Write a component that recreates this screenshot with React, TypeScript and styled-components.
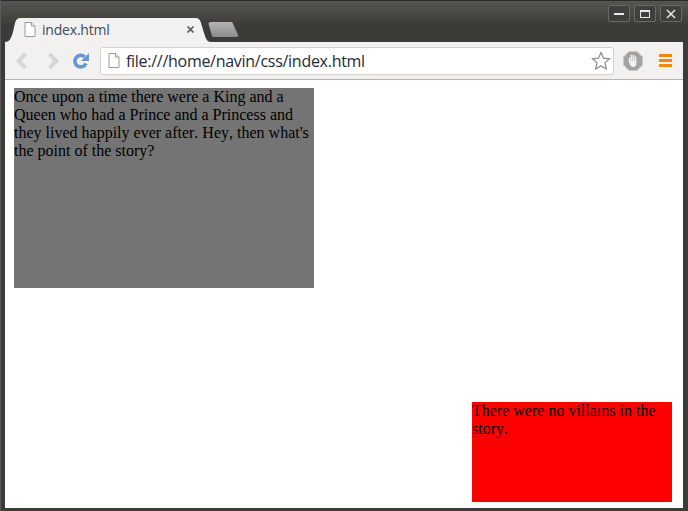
import { FC } from "react";
import styled, { createGlobalStyle } from "styled-components";

const GlobalStyle = createGlobalStyle`
    html, body {
        margin: 0;
        padding: 0;
        width: 688px;
        height: 511px;
        overflow: hidden;
        background: #3c3b37;
    }
`;

const PageIcon: FC<{ size: number }> = ({ size }) => (
    <svg width={size} height={size + 3} viewBox="0 0 12 15">
        <path d="M1 .5h6.5L11 4v10.5H1z" fill="#fff" stroke="#9a9a9a" />
        <path d="M7.5 .5V4H11" fill="#eee" stroke="#9a9a9a" />
    </svg>
);

const App: FC = () => {
    return (
        <Window>
            <GlobalStyle />
            <TitleBar>
                <Tab>
                    <PageIcon size={12} />
                    <TabTitle>index.html</TabTitle>
                    <TabClose>
                        <svg width="9" height="9" viewBox="0 0 9 9">
                            <path d="M1.5 1.5l6 6M7.5 1.5l-6 6" stroke="#555" strokeWidth="1.6" />
                        </svg>
                    </TabClose>
                </Tab>
                <NewTab />
                <WindowControls>
                    <WindowButton>
                        <svg width="12" height="10" viewBox="0 0 12 10">
                            <path d="M1 5h10" stroke="#e8e8e6" strokeWidth="2" />
                        </svg>
                    </WindowButton>
                    <WindowButton>
                        <svg width="12" height="10" viewBox="0 0 12 10">
                            <rect x="1.5" y="1.5" width="9" height="7" fill="none" stroke="#e8e8e6" />
                            <path d="M1 2h10" stroke="#e8e8e6" strokeWidth="2" />
                        </svg>
                    </WindowButton>
                    <WindowButton>
                        <svg width="12" height="10" viewBox="0 0 12 10">
                            <path d="M2 1l8 8M10 1l-8 8" stroke="#e8e8e6" strokeWidth="1.5" />
                        </svg>
                    </WindowButton>
                </WindowControls>
            </TitleBar>
            <Toolbar>
                <NavIcons>
                    <svg width="14" height="20" viewBox="0 0 14 20">
                        <path d="M10.5 3L3.8 10l6.7 7" fill="none" stroke="#d6d6d4" strokeWidth="4" />
                    </svg>
                    <ForwardSlot>
                        <svg width="14" height="20" viewBox="0 0 14 20">
                            <path d="M3.5 3l6.7 7-6.7 7" fill="none" stroke="#d6d6d4" strokeWidth="4" />
                        </svg>
                    </ForwardSlot>
                    <ReloadSlot>
                        <svg width="18" height="18" viewBox="0 0 18 18">
                            <path d="M14 11.5A5.8 5.8 0 1 1 12.6 4.8" fill="none" stroke="#6598d0" strokeWidth="3.6" />
                            <path d="M17 1v8H9z" fill="#6598d0" />
                        </svg>
                    </ReloadSlot>
                </NavIcons>
                <AddressBar>
                    <PageIcon size={12} />
                    <Url>file:///home/navin/css/index.html</Url>
                    <svg width="20" height="19" viewBox="0 0 20 19">
                        <path d="M10 1.5l2.5 5.7 6 .6-4.5 4.1 1.3 6L10 14.9l-5.3 3 1.3-6L1.5 7.8l6-.6z" fill="#fff" stroke="#8a8a8a" strokeWidth="1.2" />
                    </svg>
                </AddressBar>
                <StopBadge>
                    <svg width="20" height="20" viewBox="0 0 20 20">
                        <path d="M6 .5h8L19.5 6v8L14 19.5H6L.5 14V6z" fill="#a2a2a2" stroke="#c8c8c8" />
                        <path d="M6.5 10.5V7M8.5 10.5V4.5M10.5 10.5V4.5M12.5 10.5V6" stroke="#f0f0f0" strokeWidth="1.5" strokeLinecap="round" />
                        <path d="M5.8 10h7.6v2.5c0 2-1.3 3.5-3.2 3.5-1.8 0-2.8-1-3.5-3z" fill="#f0f0f0" />
                    </svg>
                </StopBadge>
                <MenuIcon>
                    <MenuBar />
                    <MenuBar />
                    <MenuBar />
                </MenuIcon>
            </Toolbar>
            <Content>
                <GrayBox>
                    Once upon a time there were a King and a Queen who had a Prince and a Princess and they lived happily ever after. Hey, then what's the point of the story?
                </GrayBox>
                <RedBox>There were no villains in the story.</RedBox>
            </Content>
        </Window>
    );
};

const Window = styled.div`
    display: flex;
    flex-direction: column;
    width: 688px;
    height: 511px;
    box-sizing: border-box;
    padding: 0 5px 3px 4px;
    background: #3c3b37;
    border-left: 1px solid #5a5a58;
`;

const TitleBar = styled.div`
    display: flex;
    align-items: flex-end;
    height: 42px;
    margin: 0 -5px 0 -4px;
    padding-left: 4px;
    background: linear-gradient(#565552, #3c3b37 60%);
    border-top: 1px solid #2a2a28;
    box-sizing: border-box;
`;

const Tab = styled.div`
    display: flex;
    align-items: center;
    box-sizing: border-box;
    width: 206px;
    height: 24px;
    padding: 0 16px 2px 19px;
    gap: 6px;
    background: #f2f1f0;
    clip-path: path("M0 24 C5 24 6 20 8 14 L10 5 C11 1 13 0 16 0 L190 0 C193 0 195 1 196 5 L199 15 C201 21 202 24 206 24 Z");
`;

const TabTitle = styled.span`
    flex: 1;
    font-family: "Open Sans", sans-serif;
    font-size: 14px;
    letter-spacing: -0.2px;
    color: #3c4a5a;
`;

const TabClose = styled.span`
    display: flex;
`;

const NewTab = styled.div`
    width: 31px;
    height: 15px;
    margin: 0 auto 5px -3px;
    background: linear-gradient(#b4b4b2, #8c8c8a);
    clip-path: polygon(0 0, 78% 0, 100% 100%, 14% 100%);
    border-radius: 3px;
`;

const WindowControls = styled.div`
    display: flex;
    align-self: flex-start;
    gap: 4px;
    margin: 4px 6px 0 0;
`;

const WindowButton = styled.div`
    display: flex;
    align-items: center;
    justify-content: center;
    box-sizing: border-box;
    width: 22px;
    height: 17px;
    border: 1px solid #6a6965;
    border-radius: 2px;
    background: #403f3b;
`;

const Toolbar = styled.div`
    display: flex;
    align-items: center;
    box-sizing: border-box;
    height: 38px;
    padding: 0 0 0 10px;
    background: #f2f1f0;
    border-bottom: 1px solid #b5b5b3;
`;

const NavIcons = styled.div`
    display: flex;
    align-items: center;
    width: 85px;
`;

const ForwardSlot = styled.div`
    display: flex;
    margin-left: 17px;
`;

const ReloadSlot = styled.div`
    display: flex;
    margin-left: 12px;
`;

const AddressBar = styled.div`
    display: flex;
    align-items: center;
    gap: 6px;
    box-sizing: border-box;
    width: 514px;
    height: 28px;
    margin-right: 9px;
    padding: 0 2px 0 7px;
    background: #fff;
    border: 1px solid #d2d2d0;
    border-radius: 3px;
`;

const Url = styled.span`
    flex: 1;
    font-family: "Open Sans", sans-serif;
    font-size: 16px;
    letter-spacing: -0.28px;
    color: #1f2a36;
`;

const StopBadge = styled.div`
    display: flex;
    margin-right: 16px;
`;

const MenuIcon = styled.div`
    display: flex;
    flex-direction: column;
    gap: 2px;
`;

const MenuBar = styled.span`
    width: 13px;
    height: 3px;
    background: #f28a00;
`;

const Content = styled.div`
    flex: 1;
    display: flex;
    flex-direction: column;
    box-sizing: border-box;
    padding: 8px 11px 6px 9px;
    background: #fff;
    font-family: "Liberation Serif", serif;
    font-size: 16px;
    font-kerning: none;
    color: #000;
`;

const GrayBox = styled.div`
    width: 300px;
    height: 200px;
    background: #747474;
`;

const RedBox = styled.div`
    width: 200px;
    height: 100px;
    margin-top: auto;
    align-self: flex-end;
    background: #f00;
`;

export default App;
